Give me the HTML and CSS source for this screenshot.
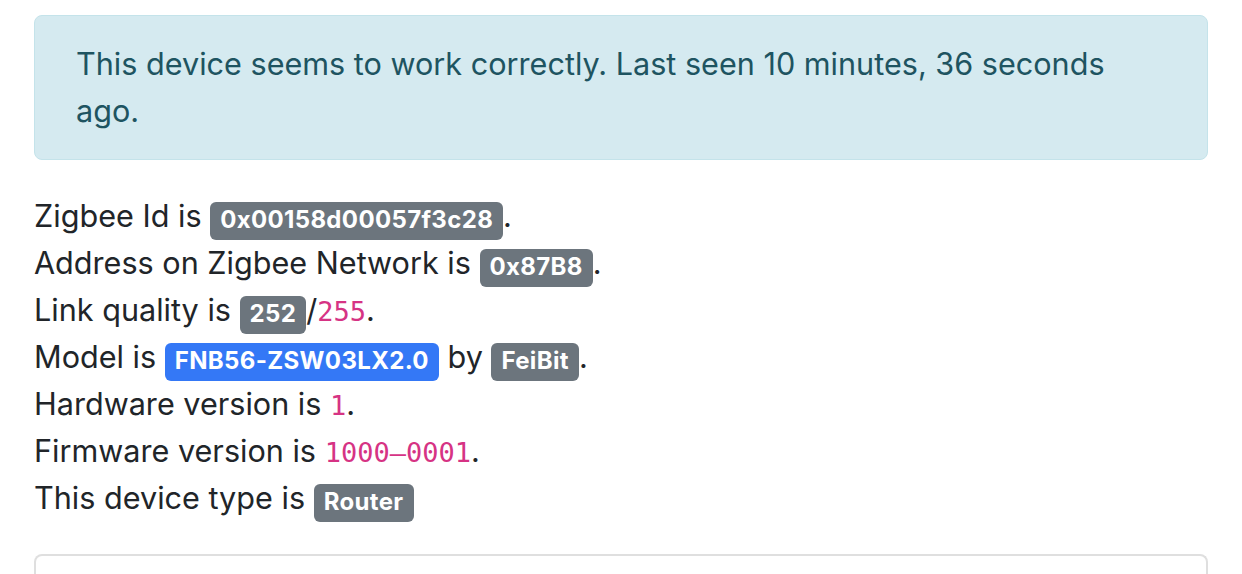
FILE: index.html
```html
<!DOCTYPE html>
<html lang="en">
<head>
<meta charset="utf-8">
<title>Device</title>
<link rel="stylesheet" href="styles.css">
</head>
<body>
<main class="page">
  <div class="alert">This device seems to work correctly. Last seen 10 minutes, 36 seconds ago.</div>
  <div class="info">
    <div class="row">Zigbee Id is <span class="badge">0x00158d00057f3c28</span>.</div>
    <div class="row">Address on Zigbee Network is <span class="badge">0x87B8</span>.</div>
    <div class="row">Link quality is <span class="badge">252</span>/<code>255</code>.</div>
    <div class="row">Model is <span class="badge badge-primary">FNB56-ZSW03LX2.0</span> by <span class="badge">FeiBit</span>.</div>
    <div class="row">Hardware version is <code>1</code>.</div>
    <div class="row">Firmware version is <code>1000–0001</code>.</div>
    <div class="row">This device type is <span class="badge">Router</span></div>
  </div>
  <div class="card"></div>
</main>
</body>
</html>
```
FILE: styles.css
```css
html, body {
  margin: 0;
  padding: 0;
  background: #fff;
}
body {
  font-family: Inter, "Noto Sans", "Liberation Sans", sans-serif;
  font-size: 30.6px;
  line-height: 47px;
  color: #212529;
}
.page {
  padding: 15px 34px 0;
}
.alert {
  background: #d5eaf0;
  border: 1px solid #c4e3ea;
  color: #1e5461;
  border-radius: 8px;
  padding: 24px 41px 25px;
  margin: 0 0 32px;
}
.info {
  margin: 0 0 33px;
}
.row {
  height: 47px;
  white-space: nowrap;
}
.badge {
  display: inline-block;
  background: #6c757d;
  color: #fff;
  font-size: 24px;
  font-weight: 700;
  letter-spacing: 0.35px;
  line-height: 1;
  padding: 6px 10px 8px;
  border-radius: 6px;
  vertical-align: -1px;
}
.badge-primary {
  background: #3478f6;
}
code {
  font-family: "DejaVu Sans Mono", "Liberation Mono", monospace;
  font-size: 27px;
  line-height: 1;
  color: #d63384;
}
.card {
  border: 2px solid #dfdfdf;
  border-bottom: none;
  border-radius: 8px 8px 0 0;
  height: 60px;
}
```
